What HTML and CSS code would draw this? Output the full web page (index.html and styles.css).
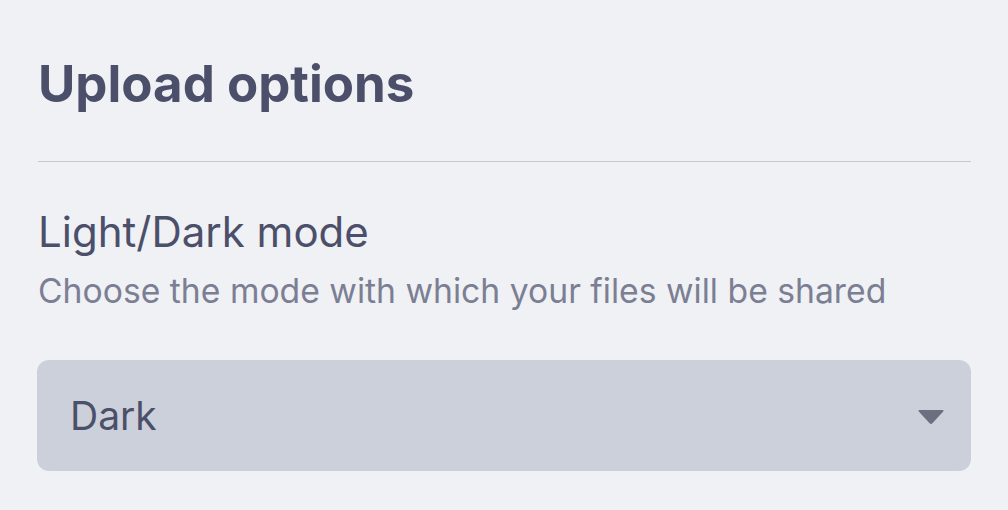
FILE: index.html
```html
<!DOCTYPE html>
<html>
<head>
<meta charset="utf-8">
<link rel="stylesheet" href="styles.css">
</head>
<body>
<div class="page">
  <h1 class="title">Upload options</h1>
  <hr class="divider">
  <div class="field">
    <div class="label">Light/Dark mode</div>
    <div class="hint">Choose the mode with which your files will be shared</div>
    <div class="select">
      <span class="value">Dark</span>
      <svg class="caret" width="28" height="16" viewBox="0 0 28 16"><path d="M2.5 1 H25.5 Q27.5 1 26 2.8 L15.4 14.3 Q14 15.8 12.6 14.3 L2 2.8 Q0.5 1 2.5 1 Z" fill="#6c6f7f"/></svg>
    </div>
  </div>
</div>
</body>
</html>
```
FILE: styles.css
```css
html, body {
  margin: 0;
  padding: 0;
  background: #eff1f5;
}
body {
  font-family: Inter, "Noto Sans", sans-serif;
  color: #4c4f69;
}
.page {
  padding: 52px 37px 0 38px;
}
.title {
  margin: 0;
  font-size: 51px;
  font-weight: 700;
  line-height: 64px;
  color: #4c4f69;
}
.divider {
  margin: 45px 0 0 0;
  border: 0;
  height: 1px;
  background: #c5c8d2;
}
.field {
  padding-top: 44px;
}
.label {
  font-size: 42px;
  line-height: 52px;
  color: #4c4f69;
}
.hint {
  font-size: 33.7px;
  line-height: 40px;
  color: #7c7f93;
  margin-top: 13px;
}
.select {
  margin-top: 49px;
  margin-left: -1px;
  height: 111px;
  border-radius: 12px;
  background: #ccd0da;
  display: flex;
  align-items: center;
  justify-content: space-between;
  padding: 0 26px 0 33px;
}
.value {
  font-size: 39px;
  color: #4c4f69;
}
.caret {
  display: block;
  margin-top: 2px;
}
```
